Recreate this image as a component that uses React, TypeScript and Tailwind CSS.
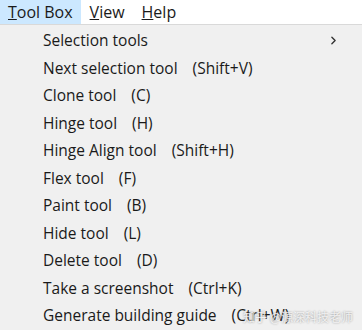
import { ChevronRight } from "lucide-react";

const items: { label: string; key?: string; sub?: boolean }[] = [
  { label: "Selection tools", sub: true },
  { label: "Next selection tool", key: "(Shift+V)" },
  { label: "Clone tool", key: "(C)" },
  { label: "Hinge tool", key: "(H)" },
  { label: "Hinge Align tool", key: "(Shift+H)" },
  { label: "Flex tool", key: "(F)" },
  { label: "Paint tool", key: "(B)" },
  { label: "Hide tool", key: "(L)" },
  { label: "Delete tool", key: "(D)" },
  { label: "Take a screenshot", key: "(Ctrl+K)" },
  { label: "Generate building guide", key: "(Ctrl+W)" },
];

export default function App() {
  return (
    <div
      className="relative h-[330px] w-[362px] overflow-hidden bg-[#f0f0f0] text-[15.5px] text-[#1a1a1a]"
      style={{ fontFamily: '"Open Sans", "Noto Sans", sans-serif' }}
    >
      {/* Menu bar */}
      <div className="flex h-[25px] items-center border-b border-[#d9d9d9] bg-white text-[16px]">
        <div className="flex h-full items-center bg-[#cce8ff] px-[8px]">
          <span><u>T</u>ool Box</span>
        </div>
        <div className="ml-[1px] px-[8px]">
          <u>V</u>iew
        </div>
        <div className="px-[9px]">
          <u>H</u>elp
        </div>
      </div>

      {/* Dropdown */}
      <div className="flex flex-col pt-[2px]">
        {items.map((item) => (
          <div key={item.label} className="flex h-[27.5px] items-center pl-[43px] pr-[22px]">
            <span>{item.label}</span>
            {item.key && <span className="ml-[15px]">{item.key}</span>}
            {item.sub && (
              <ChevronRight className="ml-auto h-[13px] w-[13px] text-[#333]" strokeWidth={2.5} />
            )}
          </div>
        ))}
      </div>

      {/* watermark */}
      <div
        className="absolute left-[243px] top-[308px] whitespace-nowrap text-[12px] text-white/80"
        style={{ fontFamily: '"Noto Sans CJK SC", sans-serif', textShadow: "0 0 2px #888" }}
      >
        知乎 @源深科技老师
      </div>
    </div>
  );
}
